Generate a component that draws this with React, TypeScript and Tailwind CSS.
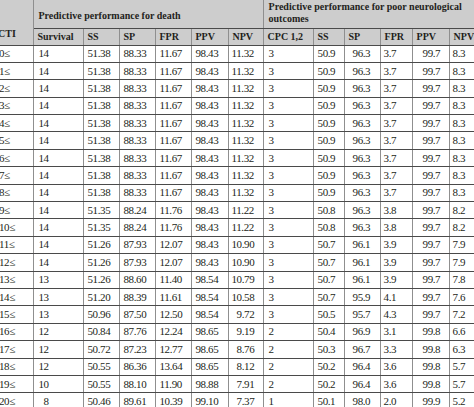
type Row = {
  cti: string;
  d: string[];
  n: string[];
};

const same = (cti: string, d: string[], n: string[]): Row => ({ cti, d, n });

const A = ["14", "51.38", "88.33", "11.67", "98.43", "11.32"];
const An = ["3", "50.9", "96.3", "3.7", "99.7", "8.3"];
const B = ["14", "51.35", "88.24", "11.76", "98.43", "11.22"];
const Bn = ["3", "50.8", "96.3", "3.8", "99.7", "8.2"];
const C = ["14", "51.26", "87.93", "12.07", "98.43", "10.90"];
const Cn = ["3", "50.7", "96.1", "3.9", "99.7", "7.9"];

const rows: Row[] = [
  ...[0, 1, 2, 3, 4, 5, 6, 7, 8].map((i) => same(`${i}≤`, A, An)),
  same("9≤", B, Bn),
  same("10≤", B, Bn),
  same("11≤", C, Cn),
  same("12≤", C, Cn),
  same("13≤", ["13", "51.26", "88.60", "11.40", "98.54", "10.79"], ["3", "50.7", "96.1", "3.9", "99.7", "7.8"]),
  same("14≤", ["13", "51.20", "88.39", "11.61", "98.54", "10.58"], ["3", "50.7", "95.9", "4.1", "99.7", "7.6"]),
  same("15≤", ["13", "50.96", "87.50", "12.50", "98.54", "9.72"], ["3", "50.5", "95.7", "4.3", "99.7", "7.2"]),
  same("16≤", ["12", "50.84", "87.76", "12.24", "98.65", "9.19"], ["2", "50.4", "96.9", "3.1", "99.8", "6.6"]),
  same("17≤", ["12", "50.72", "87.23", "12.77", "98.65", "8.76"], ["2", "50.3", "96.7", "3.3", "99.8", "6.3"]),
  same("18≤", ["12", "50.55", "86.36", "13.64", "98.65", "8.12"], ["2", "50.2", "96.4", "3.6", "99.8", "5.7"]),
  same("19≤", ["10", "50.55", "88.10", "11.90", "98.88", "7.91"], ["2", "50.2", "96.4", "3.6", "99.8", "5.7"]),
  same("20≤", ["8", "50.46", "89.61", "10.39", "99.10", "7.37"], ["1", "50.1", "98.0", "2.0", "99.9", "5.2"]),
];

const widths = [38, 50, 36, 36, 36, 37, 35, 50, 31, 36, 32, 37, 35];

// pad short integer parts so decimals line up
function Num({ v, width }: { v: string; width: number }) {
  const intLen = v.split(".")[0].length;
  return (
    <>
      {intLen < width && <span className="invisible">{"0".repeat(width - intLen)}</span>}
      {v}
    </>
  );
}

const deathPad = ["pl-[5px]", "pl-[4px]", "pl-[4px]", "pl-[4px]", "pl-[4px]", "pl-[3px]"];
const neuroPad = ["pl-[5px]", "pl-[4px]", "pl-[8px]", "pl-[3px]", "pl-[10px]", "pl-[3px]"];

const cell = "border-r-[1.5px] border-b border-r-[#8f8f8f] border-b-[#4a4a4a]";

export default function App() {
  return (
    <div
      className="h-[407px] w-[474px] overflow-hidden bg-white text-[11px] tracking-[-0.4px] text-[#231f20]"
      style={{ fontFamily: '"Liberation Serif", "Times New Roman", serif' }}
    >
      <table className="ml-[-5px] table-fixed border-collapse" style={{ width: 489 }}>
        <colgroup>
          {widths.map((w, i) => (
            <col key={i} style={{ width: w }} />
          ))}
        </colgroup>
        <thead className="bg-[#cdcdcd] text-[10px] font-bold tracking-normal">
          <tr className="h-[28px]">
            <th rowSpan={2} className={`${cell} pb-[4px] pl-[3px] text-left align-bottom`}>
              CTI
            </th>
            <th colSpan={6} className={`${cell} pb-[5px] pl-[5px] text-left align-bottom`}>
              Predictive performance for death
            </th>
            <th
              colSpan={6}
              className="border-b border-b-[#4a4a4a] pb-[3px] pl-[5px] text-left align-bottom leading-[12px]"
            >
              Predictive performance for poor neurological
              <br />
              outcomes
            </th>
          </tr>
          <tr className="h-[17px]">
            {["Survival", "SS", "SP", "FPR", "PPV", "NPV", "CPC 1,2", "SS", "SP", "FPR", "PPV", "NPV"].map((h, i) => (
              <th key={i} className={`${cell} pl-[4px] text-left align-middle`}>
                {h}
              </th>
            ))}
          </tr>
        </thead>
        <tbody>
          {rows.map((r, ri) => (
            <tr key={ri} className="h-[17.4px]">
              <td className={`${cell} pl-[4px] leading-none`}>{r.cti}</td>
              {r.d.map((v, i) => (
                <td key={i} className={`${cell} leading-none ${deathPad[i]}`}>
                  <Num v={v} width={i === 0 || i === 5 ? 2 : 1} />
                </td>
              ))}
              {r.n.map((v, i) => (
                <td key={i} className={`${cell} leading-none ${neuroPad[i]}`}>
                  {v}
                </td>
              ))}
            </tr>
          ))}
        </tbody>
      </table>
    </div>
  );
}
